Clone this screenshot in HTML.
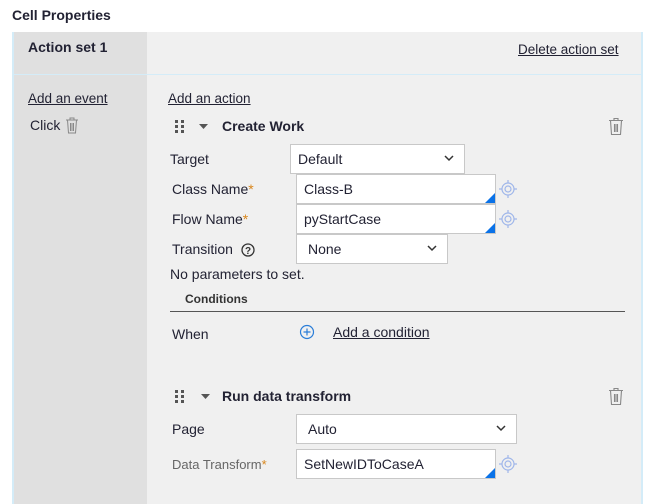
<!DOCTYPE html>
<html><head><style>
*{margin:0;padding:0;box-sizing:border-box}
body{width:646px;height:504px;background:#fff;font-family:"Liberation Sans",sans-serif;font-size:13.5px;color:#222233;position:relative;overflow:hidden}
.a{position:absolute;white-space:nowrap}
.b{font-weight:bold}
.u{text-decoration:underline}
.box{position:absolute;background:#fff;border:1px solid #c8c8c8;height:30px;padding:0 0 0 7px;line-height:28px;font-size:14px}
.tri{position:absolute;right:0;bottom:0;width:0;height:0;border-left:10px solid transparent;border-bottom:10px solid #0a72e8}
.st{color:#d8861c}
.chev{position:absolute;right:10px;top:10px}
</style></head><body>
<div class="a b" style="left:12px;top:7px;font-size:14px">Cell Properties</div>
<div class="a" style="left:12px;top:32px;width:631px;height:472px;background:#f0f0f0;border-left:2px solid #d4ecf8;border-right:2px solid #d4ecf8"></div>
<div class="a" style="left:14px;top:32px;width:133px;height:472px;background:#e0e0e0"></div>
<div class="a" style="left:14px;top:74px;width:627px;height:1px;background:#d4ecf8"></div>
<div class="a b" style="left:28px;top:39px;font-size:14px">Action set 1</div>
<div class="a u" style="left:518px;top:42px">Delete action set</div>
<div class="a u" style="left:28px;top:91px">Add an event</div>
<div class="a" style="left:30px;top:117px;font-size:14px">Click</div>
<svg class="a" style="left:65px;top:117px" width="14" height="17" viewBox="0 0 14 17" fill="none" stroke="#888" stroke-width="1"><path d="M1 3h12M5 3V1h4v2M2.5 3l1 13h7l1-13M5.5 6v8M7 6v8M8.5 6v8"/></svg>
<div class="a u" style="left:168px;top:91px">Add an action</div>
<!-- Create Work -->
<svg class="a" style="left:175px;top:120px" width="10" height="14"><g fill="#555"><rect x="0" y="0" width="3" height="3"/><rect x="6" y="0" width="3" height="3"/><rect x="0" y="5" width="3" height="3"/><rect x="6" y="5" width="3" height="3"/><rect x="0" y="10" width="3" height="3"/><rect x="6" y="10" width="3" height="3"/></g></svg>
<svg class="a" style="left:199px;top:124px" width="10" height="6"><path d="M0 0h9L4.5 5z" fill="#555"/></svg>
<div class="a b" style="left:222px;top:118px;font-size:14px">Create Work</div>
<svg class="a" style="left:608px;top:117px" width="16" height="19" viewBox="0 0 16 19" fill="none" stroke="#888" stroke-width="1.1"><path d="M1 3.5h14M6 3.5V1.5h4v2M2.5 3.5l1 14h9l1-14M6.5 7v8M8 7v8M9.5 7v8"/></svg>
<div class="a" style="left:170px;top:151px;font-size:14px">Target</div>
<div class="box" style="left:290px;top:144px;width:175px">Default<svg class="chev" width="10" height="7"><path d="M1 1l4 4 4-4" stroke="#333" stroke-width="1.5" fill="none"/></svg></div>
<div class="a" style="left:172px;top:181px;font-size:14px">Class Name<span class="st">*</span></div>
<div class="box" style="left:296px;top:174px;width:200px">Class-B<div class="tri"></div></div>
<div class="a" style="left:172px;top:211px;font-size:14px">Flow Name<span class="st">*</span></div>
<div class="box" style="left:296px;top:204px;width:200px">pyStartCase<div class="tri"></div></div>
<svg class="a" style="left:499px;top:180px" width="18" height="18" viewBox="0 0 18 18" fill="none" stroke="#9fb6ea" stroke-width="1.2"><circle cx="9" cy="9" r="6"/><circle cx="9" cy="9" r="3"/><path d="M9 0v3M9 15v3M0 9h3M15 9h3"/></svg>
<svg class="a" style="left:499px;top:210px" width="18" height="18" viewBox="0 0 18 18" fill="none" stroke="#9fb6ea" stroke-width="1.2"><circle cx="9" cy="9" r="6"/><circle cx="9" cy="9" r="3"/><path d="M9 0v3M9 15v3M0 9h3M15 9h3"/></svg>
<div class="a" style="left:172px;top:241px;font-size:14px">Transition</div>
<svg class="a" style="left:241px;top:243px" width="14" height="14"><circle cx="7" cy="7" r="6" fill="none" stroke="#333" stroke-width="1.3"/><text x="7" y="11" font-size="10" font-weight="bold" text-anchor="middle" fill="#333" font-family="Liberation Sans">?</text></svg>
<div class="box" style="left:296px;top:234px;width:152px;padding-left:11px">None<svg class="chev" width="10" height="7"><path d="M1 1l4 4 4-4" stroke="#333" stroke-width="1.5" fill="none"/></svg></div>
<div class="a" style="left:170px;top:266px;font-size:14px">No parameters to set.</div>
<div class="a b" style="left:185px;top:292px;font-size:12px;color:#333">Conditions</div>
<div class="a" style="left:170px;top:311px;width:455px;height:1px;background:#555"></div>
<div class="a" style="left:172px;top:326px;font-size:14px">When</div>
<svg class="a" style="left:299px;top:324px" width="16" height="16"><circle cx="8" cy="8" r="6.5" fill="none" stroke="#2a7dd8" stroke-width="1.2"/><path d="M8 4.5v7M4.5 8h7" stroke="#2a7dd8" stroke-width="1.2"/></svg>
<div class="a u" style="left:333px;top:324px;font-size:14px">Add a condition</div>
<!-- Run data transform -->
<svg class="a" style="left:175px;top:390px" width="10" height="14"><g fill="#555"><rect x="0" y="0" width="3" height="3"/><rect x="6" y="0" width="3" height="3"/><rect x="0" y="5" width="3" height="3"/><rect x="6" y="5" width="3" height="3"/><rect x="0" y="10" width="3" height="3"/><rect x="6" y="10" width="3" height="3"/></g></svg>
<svg class="a" style="left:201px;top:394px" width="10" height="6"><path d="M0 0h9L4.5 5z" fill="#555"/></svg>
<div class="a b" style="left:222px;top:388px;font-size:14px">Run data transform</div>
<svg class="a" style="left:608px;top:387px" width="16" height="19" viewBox="0 0 16 19" fill="none" stroke="#888" stroke-width="1.1"><path d="M1 3.5h14M6 3.5V1.5h4v2M2.5 3.5l1 14h9l1-14M6.5 7v8M8 7v8M9.5 7v8"/></svg>
<div class="a" style="left:172px;top:421px;font-size:14px">Page</div>
<div class="box" style="left:296px;top:414px;width:221px;padding-left:11px">Auto<svg class="chev" width="10" height="7"><path d="M1 1l4 4 4-4" stroke="#333" stroke-width="1.5" fill="none"/></svg></div>
<div class="a" style="left:172px;top:457px;font-size:13px;color:#666">Data Transform<span class="st">*</span></div>
<div class="box" style="left:296px;top:449px;width:200px">SetNewIDToCaseA<div class="tri"></div></div>
<svg class="a" style="left:499px;top:455px" width="18" height="18" viewBox="0 0 18 18" fill="none" stroke="#9fb6ea" stroke-width="1.2"><circle cx="9" cy="9" r="6"/><circle cx="9" cy="9" r="3"/><path d="M9 0v3M9 15v3M0 9h3M15 9h3"/></svg>
</body></html>
